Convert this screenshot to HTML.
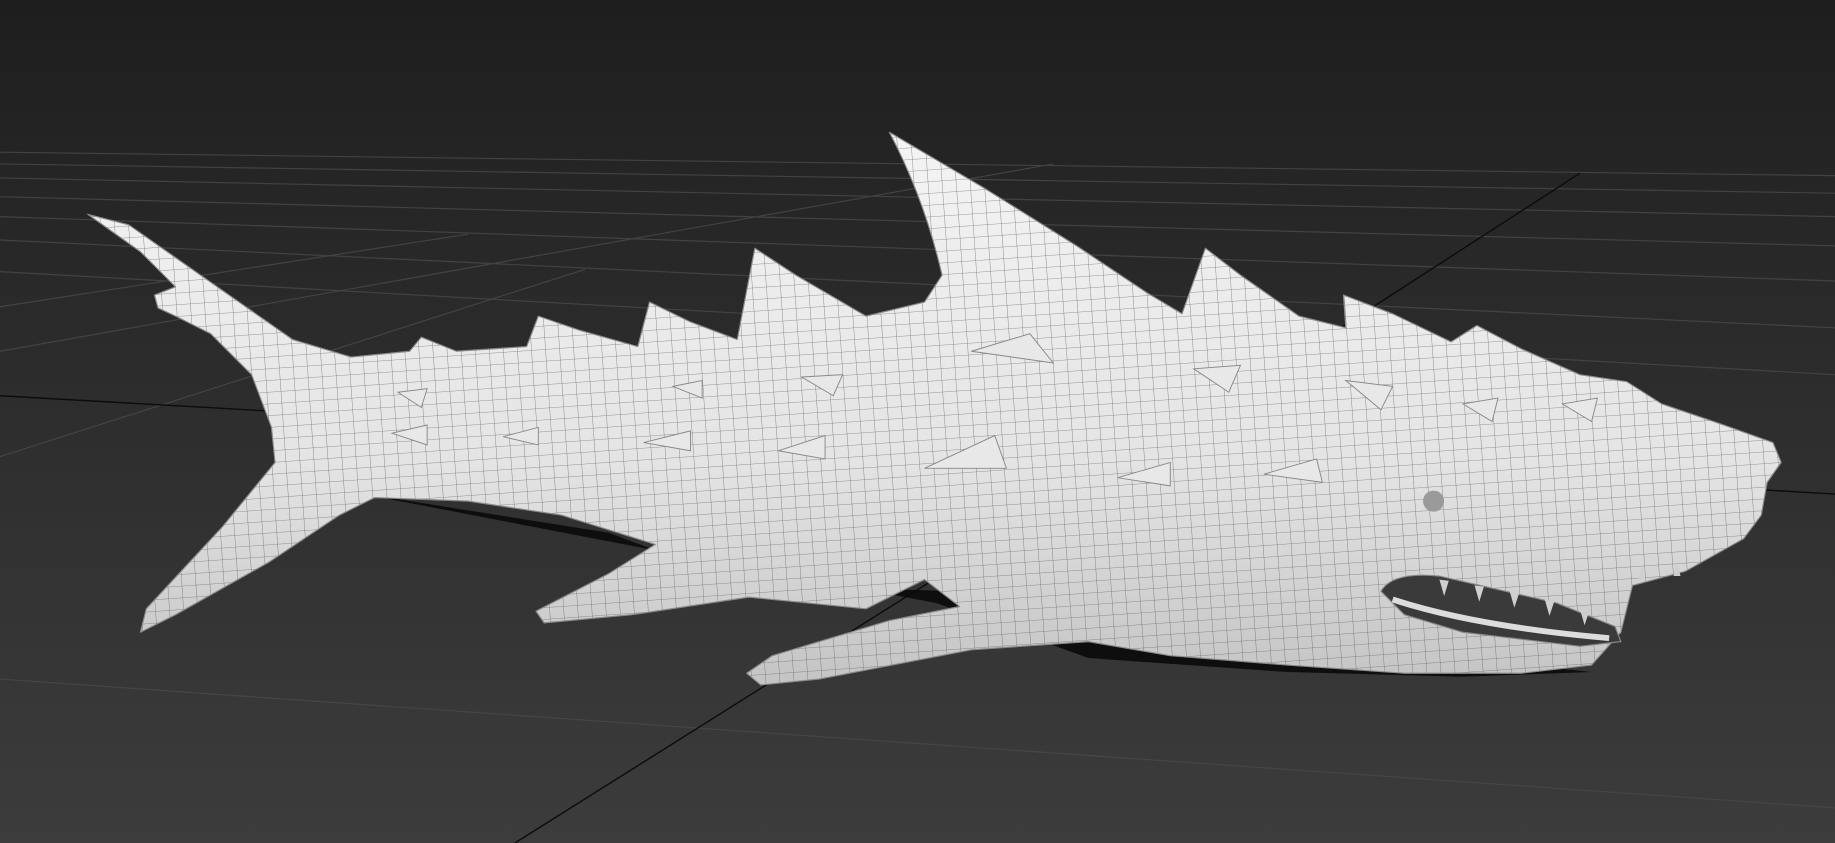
<!DOCTYPE html>
<html><head><meta charset="utf-8"><style>
html,body{margin:0;padding:0;background:#2a2a2a;overflow:hidden}
svg{display:block}
</style></head><body>
<svg width="1835" height="843" viewBox="0 0 1568 720" preserveAspectRatio="none" xmlns="http://www.w3.org/2000/svg">
<defs>
<linearGradient id="bg" x1="0" y1="0" x2="0" y2="1">
<stop offset="0" stop-color="#1e1e1e"/><stop offset="0.3" stop-color="#282828"/><stop offset="1" stop-color="#3c3c3c"/>
</linearGradient>
<linearGradient id="sk" x1="0" y1="0" x2="0" y2="1">
<stop offset="0" stop-color="#f4f4f4"/><stop offset="0.6" stop-color="#e4e4e4"/><stop offset="1" stop-color="#c4c4c4"/>
</linearGradient>
<pattern id="wire" width="12" height="10" patternUnits="userSpaceOnUse" patternTransform="rotate(-4)">
<path d="M0 0H12M0 0V10" stroke="#555" stroke-width="0.7" fill="none"/>
</pattern>
<clipPath id="shk"><use href="#body"/></clipPath>
<path id="body" d="M75 183 L110 192 L150 220 L200 255 L250 290 L300 305 L350 300 L360 288 L390 300 L450 296 L460 270 L495 282 L545 296 L555 258 L590 275 L630 290 L645 212 L680 235 L740 270 L790 258 L805 235 Q790 170 760 113 L840 160 L920 210 L980 250 L1010 268 L1030 212 L1060 235 L1110 270 L1150 280 L1148 252 L1190 268 L1240 292 L1262 278 L1300 298 L1350 320 L1390 326 L1420 345 L1470 362 L1515 378 L1522 395 L1510 412 L1505 440 L1490 460 L1440 488 L1395 500 L1385 540 L1360 568 L1300 575 L1200 575 L1100 568 L1000 560 L930 548 L830 555 L700 580 L650 585 L638 575 L660 560 L760 530 L820 518 L790 495 L740 520 L640 510 L540 525 L465 532 L458 522 L520 490 L560 465 L480 440 L400 428 L320 425 L290 440 L230 480 L150 525 L120 540 L125 520 L190 450 L235 395 L232 365 L215 320 L180 285 L150 270 L135 263 L132 252 L150 245 L120 215 Z"/>
</defs>
<rect width="1568" height="720" fill="url(#bg)"/>
<g stroke="#4a4a4a" stroke-width="1" fill="none" opacity="0.8">
<path d="M0 130 L1568 150"/><path d="M0 140 L1568 165"/><path d="M0 152 L1568 185"/><path d="M0 168 L1568 210"/><path d="M0 185 L1568 240"/><path d="M0 205 L1568 280"/><path d="M0 232 L1568 320"/>
<path d="M0 262 L400 200"/><path d="M0 300 L900 140"/><path d="M0 390 L500 230"/>
<path d="M0 580 L1568 690"/>
</g>
<g stroke="#0c0c0c" stroke-width="1.2" fill="none">
<path d="M0 338 L300 355"/><path d="M1500 418 L1568 422"/>
<path d="M440 720 L925 415"/><path d="M1130 290 L1350 148"/>
</g>
<path d="M300 420 L560 470 L800 515 L930 562 L1100 574 L1250 578 L1360 574 L1230 560 L1000 545 L820 505 L640 500 L520 455 Z" fill="#0a0a0a" opacity="0.9"/>
<use href="#body" fill="url(#sk)"/>
<rect width="1568" height="720" fill="url(#wire)" clip-path="url(#shk)" opacity="0.75"/>
<use href="#body" fill="none" stroke="#8a8a8a" stroke-width="1" stroke-linejoin="round"/>
<path d="M1180 505 Q1190 488 1230 492 L1330 515 L1380 535 L1385 548 L1350 552 L1250 540 L1200 525 Z" fill="#3a3a3a" stroke="#888" stroke-width="1"/>
<path d="M1190 512 Q1260 535 1375 545" stroke="#dcdcdc" stroke-width="5" fill="none"/>
<g fill="#cfcfcf">
<path d="M1230 495 l4 14 l4 -13z M1260 500 l4 14 l4 -13z M1290 505 l4 14 l4 -12z M1320 512 l4 14 l4 -12z M1350 520 l4 14 l4 -12z M1400 495 l3 -12 l3 12z M1430 492 l3 -12 l3 12z"/>
</g>
<g fill="#e8e8e8" stroke="#888" stroke-width="0.8">
<path d="M830 300 L880 285 L900 310 Z"/><path d="M790 400 L850 372 L860 400 Z"/><path d="M1020 315 L1060 312 L1050 335 Z"/>
<path d="M955 408 L1000 395 L1000 415 Z"/><path d="M1080 405 L1125 392 L1130 412 Z"/><path d="M1150 325 L1190 330 L1180 350 Z"/>
<path d="M575 330 L600 325 L600 340 Z"/><path d="M550 378 L590 368 L590 385 Z"/><path d="M665 385 L705 372 L705 392 Z"/>
<path d="M340 335 L365 332 L360 348 Z"/><path d="M335 370 L365 363 L365 380 Z"/><path d="M430 373 L460 365 L460 380 Z"/>
<path d="M1250 345 L1280 340 L1275 360 Z"/><path d="M1335 345 L1365 340 L1360 360 Z"/><path d="M685 322 L720 320 L712 338 Z"/>
</g>
<circle cx="1225" cy="428" r="9" fill="#9a9a9a"/>
</svg>
</body></html>
